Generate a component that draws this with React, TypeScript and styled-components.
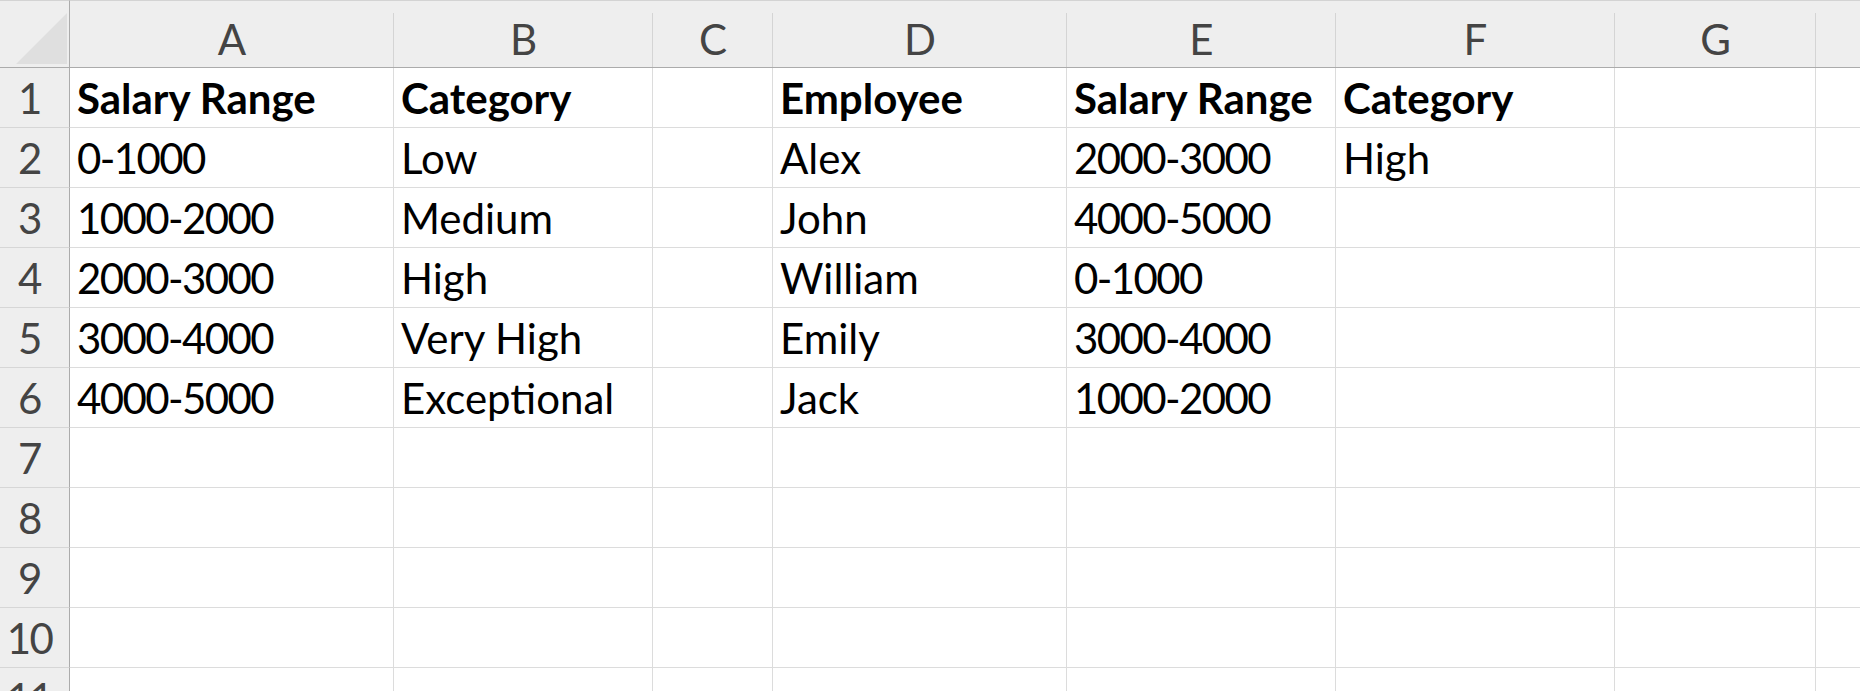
import React from "react";
import styled, { createGlobalStyle } from "styled-components";

const GlobalStyle = createGlobalStyle`
  html, body {
    margin: 0;
    padding: 0;
    background: #ffffff;
    overflow: hidden;
  }
  body {
    font-family: Lato, "Liberation Sans", sans-serif;
  }
  * { box-sizing: border-box; }
`;

const COLS = [
  { key: "A", width: 324 },
  { key: "B", width: 259 },
  { key: "C", width: 120 },
  { key: "D", width: 294 },
  { key: "E", width: 269 },
  { key: "F", width: 279 },
  { key: "G", width: 201 },
  { key: "", width: 320 },
];

const ROW_HEADER_W = 70;

const Sheet = styled.div`
  display: grid;
  grid-template-columns: ${ROW_HEADER_W}px ${COLS.map((c) => `${c.width}px`).join(" ")};
  grid-template-rows: 68px;
  grid-auto-rows: 60px;
  width: 1860px;
  height: 691px;
  overflow: hidden;
  font-family: Lato, "Liberation Sans", sans-serif;
  font-size: 42px;
`;

const Corner = styled.div`
  background: #eeeeee;
  border-top: 1px solid #d3d3d3;
  border-bottom: 1px solid #ababab;
  border-right: 1px solid #ababab;
  display: flex;
  align-items: flex-end;
  justify-content: flex-end;
  padding: 0 2px 3px 0;
`;

const CornerTriangle = styled.svg`
  display: block;
  width: 51px;
  height: 51px;
`;

const ColHeader = styled.div`
  position: relative;
  background: #eeeeee;
  border-top: 1px solid #d3d3d3;
  border-bottom: 1px solid #ababab;
  color: #444444;
  display: flex;
  align-items: flex-end;
  justify-content: center;
  line-height: 1;
  padding-bottom: 7px;

  &::after {
    content: "";
    position: absolute;
    right: 0;
    top: 12px;
    bottom: 0;
    width: 1px;
    background: #d4d4d4;
  }
`;

const RowHeader = styled.div`
  background: #eeeeee;
  border-right: 1px solid #ababab;
  border-bottom: 1px solid #d6d6d6;
  color: #444444;
  display: flex;
  align-items: flex-end;
  justify-content: center;
  line-height: 1;
  letter-spacing: -1.5px;
  padding: 0 10px 8px 0;
`;

const Cell = styled.div<{ $bold?: boolean; $numeric?: boolean }>`
  border-right: 1px solid #dcdcdc;
  border-bottom: 1px solid #dcdcdc;
  color: #000000;
  font-weight: ${(p) => (p.$bold ? 700 : 400)};
  letter-spacing: ${(p) => (p.$numeric ? "-1.6px" : "0")};
  display: flex;
  align-items: flex-end;
  line-height: 1;
  padding: 0 0 8px 7px;
  white-space: nowrap;
`;

const data: string[][] = [
  ["Salary Range", "Category", "", "Employee", "Salary Range", "Category", "", ""],
  ["0-1000", "Low", "", "Alex", "2000-3000", "High", "", ""],
  ["1000-2000", "Medium", "", "John", "4000-5000", "", "", ""],
  ["2000-3000", "High", "", "William", "0-1000", "", "", ""],
  ["3000-4000", "Very High", "", "Emily", "3000-4000", "", "", ""],
  ["4000-5000", "Exceptional", "", "Jack", "1000-2000", "", "", ""],
  ["", "", "", "", "", "", "", ""],
  ["", "", "", "", "", "", "", ""],
  ["", "", "", "", "", "", "", ""],
  ["", "", "", "", "", "", "", ""],
  ["", "", "", "", "", "", "", ""],
];

const isNumeric = (v: string) => /^[\d-]+$/.test(v);

export default function App() {
  return (
    <>
      <GlobalStyle />
      <Sheet>
        <Corner>
          <CornerTriangle viewBox="0 0 51 51">
            <polygon points="51,0 51,51 0,51" fill="#dfdfdf" />
          </CornerTriangle>
        </Corner>
        {COLS.map((c, i) => (
          <ColHeader key={i}>{c.key}</ColHeader>
        ))}
        {data.map((row, r) => (
          <React.Fragment key={r}>
            <RowHeader>{r + 1}</RowHeader>
            {row.map((v, c) => (
              <Cell key={c} $bold={r === 0} $numeric={isNumeric(v)}>
                {v}
              </Cell>
            ))}
          </React.Fragment>
        ))}
      </Sheet>
    </>
  );
}
